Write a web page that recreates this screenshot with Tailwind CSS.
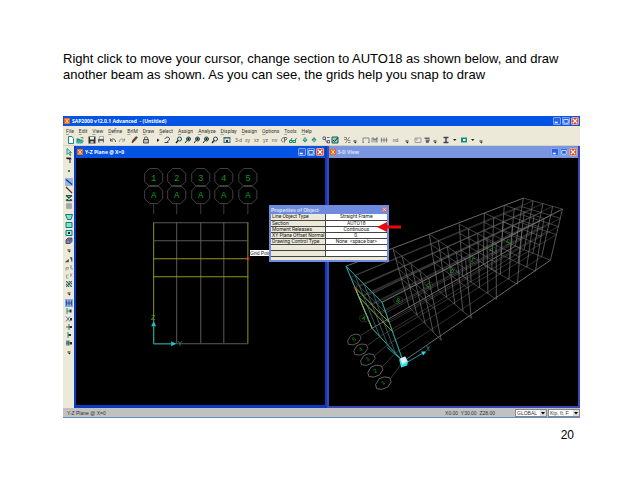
<!DOCTYPE html>
<html lang="en">
  <head>
    <meta charset="UTF-8" />
    <meta name="viewport" content="width=device-width, initial-scale=1.0" />
    <script src="https://cdn.jsdelivr.net/npm/@tailwindcss/browser@4"></script>
    <title>SAP2000 beam drawing</title>
  </head>
  <body class="bg-white text-black font-['Liberation_Sans',sans-serif]">
    <main class="pt-[51px] pl-[63px] pr-[58px]">
      <p class="text-[13px] leading-4 h-[65px]">
        Right click to move your cursor, change section to AUTO18 as shown below, and draw<br />another
        beam as shown. As you can see, the grids help you snap to draw
      </p>

      <section id="app" class="relative flex flex-col bg-[#ece9d8] text-[5px] leading-[6px]">
        <header class="flex items-center justify-between h-[10px] pl-px pr-px bg-[#0453e4] text-white">
          <div class="flex items-center gap-[2px]">
            <svg class="size-[6px]" viewBox="0 0 12 12"><use href="#logo" /></svg>
            <h1 class="font-bold whitespace-pre font-['Open_Sans',sans-serif]">SAP2000 v12.0.1 Advanced  - (Untitled)</h1>
          </div>
          <div class="flex gap-px" data-winbuttons></div>
        </header>

        <nav id="menu" class="flex items-center h-[9px] pl-[3px] gap-[5px] text-[#333] font-[Roboto,sans-serif]"></nav>

        <div id="toolbar" class="flex items-center h-[11px] pl-[3px] gap-[3px] border-b border-[#d5d2c2]"></div>

        <div class="flex">
          <div id="sidebar" class="flex flex-col items-center w-[11px] shrink-0 pt-[2px] gap-[3px]"></div>

          <section class="flex flex-col w-[252px] grow border-x-2 border-b-[3px] border-[#0a3cc0] bg-black">
            <header class="flex items-center justify-between h-3 pl-px pr-px bg-[#0453e4] text-white">
              <div class="flex items-center gap-[2px]">
                <svg class="size-[6px]" viewBox="0 0 12 12"><use href="#logo" /></svg>
                <h2 class="font-bold font-['Open_Sans',sans-serif]">Y-Z Plane @ X=0</h2>
              </div>
              <div class="flex gap-px" data-winbuttons></div>
            </header>
            <svg id="plane" class="w-full" viewBox="76 158 248 247" fill="none"></svg>
          </section>

          <section class="flex flex-col w-[253px] grow border-x-2 border-b-2 border-[#3a48b4] bg-black">
            <header class="flex items-center justify-between h-3 pl-px pr-px bg-[#7b96e1] text-[#dbe4fa]">
              <div class="flex items-center gap-[2px]">
                <svg class="size-[6px]" viewBox="0 0 12 12"><use href="#logo" /></svg>
                <h2 class="font-bold font-['Open_Sans',sans-serif]">3-D View</h2>
              </div>
              <div class="flex gap-px" data-winbuttons></div>
            </header>
            <svg id="space" class="w-full" viewBox="328 158 249 248" fill="none"></svg>
          </section>
        </div>

        <footer class="flex items-center h-[10px] pl-1 bg-[#c1c1c1] border-b border-[#5b8fd0] text-[#333]">
          <span class="grow">Y-Z Plane @ X=0</span>
          <span class="whitespace-pre mr-5">X0.00  Y30.00  Z28.00</span>
          <label class="relative flex mr-px">
            <select aria-label="Coordinate system" class="appearance-none w-8 h-2 px-px bg-white border border-[#888] text-[5px] leading-[6px]">
              <option>GLOBAL</option>
            </select>
            <svg class="absolute right-px top-px size-[6px] bg-[#ddd]" viewBox="0 0 6 6"><path d="M1 2h4L3 4.5z" fill="#000" /></svg>
          </label>
          <label class="relative flex">
            <select aria-label="Units" class="appearance-none w-8 h-2 px-px bg-white border border-[#888] text-[5px] leading-[6px]">
              <option>Kip, ft, F</option>
            </select>
            <svg class="absolute right-px top-px size-[6px] bg-[#ddd]" viewBox="0 0 6 6"><path d="M1 2h4L3 4.5z" fill="#000" /></svg>
          </label>
        </footer>

        <span class="absolute left-[187px] top-[134px] w-7 h-[6px] bg-white text-[#222] whitespace-nowrap">Grid Point</span>

        <section class="absolute left-[206px] top-[89px] w-[120px] border-2 border-t-0 border-[#6f8be0] bg-[#ece9d8]">
          <header class="flex items-center justify-between h-[9px] bg-[#6f8be0] text-[#dbe4fa]">
            <h2 class="font-bold">Properties of Object</h2>
            <button aria-label="Close" class="size-[5px] bg-[#c9788c] text-white">
              <svg viewBox="0 0 8 8" stroke="currentColor"><path d="M2 2l4 4M6 2l-4 4" /></svg>
            </button>
          </header>
          <table class="w-full border-collapse text-[#222] font-[Roboto,sans-serif]">
            <tbody id="props"></tbody>
          </table>
          <div class="h-[3px]"></div>
        </section>

        <svg class="absolute left-[314px] top-[106px] w-6 h-[10px]" viewBox="0 0 24 10">
          <path d="M0 5L10 0V3.5H24V6.500H10V10z" fill="#e8090c" />
        </svg>
      </section>

      <p class="text-right text-xs leading-4 pt-[9px] pr-[6px]">20</p>
    </main>

    <svg class="hidden">
      <symbol id="logo" viewBox="0 0 12 12">
        <rect width="12" height="12" fill="#e8641c" />
        <path d="M2 2l8 8M10 2l-8 8M6 1v10" stroke="#ffd9a0" stroke-width="1.500" />
      </symbol>
    </svg>

    <script>
      // 16x16 glyphs used by the two toolbars
      const icons = {
        new: '<path d="M3 1h7l3 4v10H3z" fill="#fff" stroke="#198c8c" stroke-width="2"/>',
        open: '<path d="M1 5h5l2 2h5v7H1z" fill="#198c8c"/><path d="M3 9h13l-3 6H1z" fill="#3bb0a8"/><path d="M9 3h5v3" stroke="#333" fill="none"/>',
        save: '<path d="M1 1h14v14H1z" fill="#333"/><path d="M4 2h8v5H4z" fill="#e8efef"/><path d="M5 10h6v5H5z" fill="#bbb"/>',
        print: '<path d="M2 6h12v7H2z" fill="#667"/><path d="M5 1h8v5H4z" fill="#fff" stroke="#555"/><path d="M5 10h7v5H5z" fill="#ddd"/>',
        undo: '<path d="M3 5v5h5M3 9c4-5 10-4 10 3" fill="none" stroke="#555" stroke-width="2"/>',
        redo: '<path d="M13 5v5H8M13 9C9 4 3 5 3 12" fill="none" stroke="#999" stroke-width="2"/>',
        pencil: '<path d="M4 14l1-5 7-8 3 2-7 8z" fill="#7c3c20" stroke="#222"/>',
        lock: '<path d="M3 7h10v7H3z" fill="#bbb" stroke="#333" stroke-width="1.500"/><path d="M5 7V3q3-3 6 0v4" fill="none" stroke="#333" stroke-width="1.500"/>',
        run: '<path d="M6 5l5 3-5 4z" fill="#222"/>',
        refresh: '<path d="M4 6c1-5 9-5 9 0s-5 3-5 7M3 13h8" fill="none" stroke="#345" stroke-width="2"/>',
        zoom: '<circle cx="9" cy="6" r="4" fill="#d8eeee" stroke="#2c4450" stroke-width="2"/><path d="M6 9l-4 5" stroke="#222" stroke-width="2.500"/>',
        zoomIn: '<circle cx="9" cy="6" r="4" fill="#7cbcb8" stroke="#2c4450" stroke-width="2"/><path d="M6 9l-4 5M7 6h4M9 4v4" stroke="#222" stroke-width="2"/>',
        pan: '<path d="M1 2h14v12H1z" fill="#3b6f7c"/><path d="M3 5h10v7H3z" fill="#cfe3e3"/><path d="M6 8h4v4H6z" fill="#333"/>',
        rotate: '<path d="M9 4C3 1 0 12 7 12M9 13V3h4q2 3-1 5H9" fill="none" stroke="#444" stroke-width="1.500"/>',
        glasses: '<path d="M1 9h5v4H1zM8 9h5v4H8zM6 10h2M3 9l3-5M12 9l3-5" fill="none" stroke="#198c70" stroke-width="2"/>',
        up: '<path d="M8 2l5 6-5 5-5-5z" fill="#178a84"/><path d="M8 5v5M5 8l3-3 3 3" stroke="#fff" fill="none"/>',
        down: '<path d="M8 2l5 6-5 5-5-5z" fill="#178a84"/><path d="M8 5v5M5 8l3 3 3-3" stroke="#fff" fill="none"/>',
        assign: '<path d="M2 2h5v5H2zM7 7l2 6M10 3h5M11 9h4v5h-4z" fill="none" stroke="#336" stroke-width="1.500"/>',
        check: '<path d="M2 2h12v12H2z" fill="#8ed2c0" stroke="#175c50" stroke-width="2"/><path d="M4 8l3 3 6-7" fill="none" stroke="#123" stroke-width="2"/>',
        percent: '<path d="M2 3h5v4H2M13 2L5 14M10 9h5M10 13h5" fill="none" stroke="#666" stroke-width="1.500"/>',
        bracket: '<path d="M2 13V4h12v9M1 13h3M12 13h3" fill="none" stroke="#667" stroke-width="1.500"/>',
        posts: '<path d="M2 13V4h4v9M10 13V4h4M12 4v9M4 7h8" fill="none" stroke="#667" stroke-width="1.500"/>',
        pins: '<path d="M3 3v10M8 3v10M13 3v10M1 8h14" fill="none" stroke="#667" stroke-width="1.500"/>',
        box: '<path d="M2 4h12v9H2z" fill="none" stroke="#888" stroke-width="1.500"/><path d="M3 5h4v4H3z" fill="#aaa"/>',
        hand: '<path d="M3 3h10v3H3zM5 7h9l-3 7H6z" fill="#667"/>',
        ibeam: '<path d="M3 3h10M3 13h10M8 3v10" stroke="#445" stroke-width="3"/>',
        area: '<path d="M2 3h12v10H2z" fill="#1b8a7c"/><path d="M6 6h5v4H6z" fill="#e0f4f0"/>',
        caret: '<path d="M4 6h7l-3.500 4z" fill="#222"/>',
        grip: '<path d="M5 9h6v2H5zM6 12h5l-2 3z" fill="#222"/>',
        arrow: '<path d="M4 1v12l3-3 3 5 2-1-3-5h4z" fill="#a8e8e4" stroke="#157878" stroke-width="1.500"/>',
        select: '<path d="M2 3h9l3 4-3-1v8H9V7L3 6z" fill="#222"/>',
        dot: '<path d="M6 6h4v4H6z" fill="#178a70"/>',
        line: '<path d="M0 0h16v16H0z" fill="#9ab4e8"/><path d="M2 3l12 10" stroke="#123a90" stroke-width="2.500"/>',
        brace: '<path d="M2 2l12 12" stroke="#5a3424" stroke-width="2.500"/>',
        cross: '<path d="M2 3l12 10M14 3L2 13M3 3h10M3 13h10" stroke="#205848" stroke-width="2.500"/>',
        mesh: '<path d="M2 2h12v12H2z" fill="#bbb"/><path d="M2 6h12M2 10h12M6 2v12M10 2v12" stroke="#888"/>',
        poly: '<path d="M1 3h14l-3 10H5z" fill="#7be0d8" stroke="#137c74" stroke-width="2"/>',
        rect: '<path d="M2 3h12v10H2z" fill="#7be0d8" stroke="#137c74" stroke-width="2"/>',
        rectDot: '<path d="M2 3h12v10H2z" fill="#a0ebe4" stroke="#137c74" stroke-width="2"/><path d="M6 6h4v4H6z" fill="#134"/>',
        solid: '<path d="M2 6l4-4h8v7l-4 4H2z" fill="#8088b8" stroke="#334" stroke-width="1.500"/><path d="M2 6h8v7M10 6l4-4" stroke="#334" fill="none"/>',
        all: '<path d="M1 12l6-5v5zM10 3h4v9" fill="#556" stroke="#333"/>',
        ps: '<path d="M2 13V7h5v3H2M10 4h4l-4 4h4v4" fill="none" stroke="#889" stroke-width="1.500"/>',
        clr: '<path d="M7 6H3v6h4M11 3v6M14 3l-2 3 2 3" fill="none" stroke="#889" stroke-width="1.500"/>',
        hatch: '<path d="M2 2h12v12H2z" fill="#a9c0c0"/><path d="M2 2l12 12M2 8l6 6M8 2l6 6M14 2L2 14" stroke="#244" stroke-width="1.500"/>',
        snap: '<path d="M0 0h16v16H0z" fill="#8aa8e4"/><path d="M2 8h12M3 3v10M8 3v10M13 3v10" stroke="#1d3c8c" stroke-width="1.500"/>',
        ends: '<path d="M4 2v12M4 8h5" stroke="#178a84" stroke-width="2"/><path d="M9 5h4v6H9z" fill="#233"/>',
        inter: '<path d="M2 3l8 10M2 13L10 3" stroke="#458" stroke-width="1.500"/><path d="M10 6h4v5h-4z" fill="#233"/>',
        perp: '<path d="M8 2v12M2 8h6" stroke="#466" stroke-width="2"/><path d="M9 6h5v4H9z" fill="#233"/>',
        edge: '<path d="M6 2v12" stroke="#178a84" stroke-width="2"/><path d="M7 6h5v4H7z" fill="#233"/>',
        fine: '<path d="M2 3h8v10H2z" fill="#8aa"/><path d="M4 3v10M7 3v10M2 8h12" stroke="#244"/><path d="M10 6h4v5h-4z" fill="#233"/>',
      };

      // a name starting with "=" is a text button
      const toolbar = [
        ["new", "open"], ["save", "print"], ["undo", "redo"], ["pencil"], ["lock"], ["run", "refresh"],
        ["zoom", "zoomIn", "zoomIn", "zoomIn", "zoom"], ["pan"],
        ["=3-d", "=xy", "=xz", "=yz", "=nv", "rotate", "glasses"], ["up", "down"], ["assign", "check"],
        ["percent", "grip"], ["bracket", "posts", "pins"], ["=nd"], ["grip"], ["box", "hand", "grip"],
        ["ibeam", "caret", "area", "caret", "grip"],
      ];
      const sidebar = [
        ["arrow", "select"], ["dot"], ["line", "brace", "cross", "mesh"], ["poly", "rect", "rectDot", "solid", "grip"],
        ["all", "ps", "clr", "hatch", "grip"], ["snap", "ends", "inter", "perp", "edge", "fine", "grip"],
      ];
      const menu = ["File", "Edit", "View", "Define", "BrIM", "Draw", "Select", "Assign", "Analyze", "Display", "Design", "Options", "Tools", "Help"];
      const props = [
        ["Line Object Type", "Straight Frame"],
        ["Section", "AUTO18"],
        ["Moment Releases", "Continuous"],
        ["XY Plane Offset Normal", "0."],
        ["Drawing Control Type", "None  <space bar>"],
        ["", ""],
        ["", ""],
      ];

      function glyph(name) {
        if (name[0] === "=") return name.slice(1);
        return `<svg class="size-2 shrink-0" viewBox="0 0 16 16">${icons[name]}</svg>`;
      }

      document.getElementById("toolbar").innerHTML = toolbar
        .map((g) => `<div class="flex">${g.map((n) => `<button aria-label="${n.replace("=", "")}" class="flex items-center justify-center ${n === "grip" ? "w-[7px]" : "w-[9px]"} h-2 text-[#555]">${glyph(n)}</button>`).join("")}</div>`)
        .join("");
      document.getElementById("sidebar").innerHTML = sidebar
        .map((g) => `<div class="flex flex-col">${g.map((n) => `<button aria-label="${n}" class="flex items-center justify-center w-[9px] h-2">${glyph(n)}</button>`).join("")}</div>`)
        .join("");
      document.getElementById("menu").innerHTML = menu
        .map((m) => `<button><span class="underline decoration-black/30">${m[0]}</span>${m.slice(1)}</button>`)
        .join("");
      document.getElementById("props").innerHTML = props
        .map(([k, v]) => `<tr class="h-[6px] border-b border-[#444]"><th scope="row" class="w-[51px] p-0 pl-px font-normal text-left leading-[5px] whitespace-nowrap border-r border-[#444]">${k}</th><td class="p-0 bg-white text-center leading-[5px] whitespace-pre">${v.replace("<", "&lt;")}</td></tr>`)
        .join("");
      document.querySelectorAll("[data-winbuttons]").forEach((el) => {
        el.innerHTML = `
          <button aria-label="Minimize" class="size-2 rounded-[1px] border border-[#7ea4f4] bg-[#2a62e4]"><svg viewBox="0 0 8 8"><path d="M1 6h4" stroke="#fff" stroke-width="2"/></svg></button>
          <button aria-label="Restore" class="size-2 rounded-[1px] border border-[#7ea4f4] bg-[#2a62e4]"><svg viewBox="0 0 8 8"><path d="M1 2h6v5H1z" fill="none" stroke="#fff"/></svg></button>
          <button aria-label="Close" class="size-2 rounded-[1px] border border-[#e8a090] bg-[#d9452c]"><svg viewBox="0 0 8 8"><path d="M1 1l6 6M7 1L1 7" stroke="#fff" stroke-width="1.500"/></svg></button>`;
      });

      const line = (a, b, color, w = 0.6) =>
        `<path d="M${a[0]} ${a[1]}L${b[0]} ${b[1]}" stroke="${color}" stroke-width="${w}"/>`;
      const mix = (a, b, t) => [a[0] + (b[0] - a[0]) * t, a[1] + (b[1] - a[1]) * t];
      const label = (x, y, text, size, color = "#0a9a22") =>
        `<text x="${x}" y="${y}" font-size="${size}" text-anchor="middle" fill="${color}" font-family="Liberation Mono, monospace">${text}</text>`;

      // elevation at X=0
      const cols = [153.5, 176.5, 200.5, 223.5, 247.5];
      let out = "";
      cols.forEach((x, i) => {
        [177.5, 194.5].forEach((y, k) => {
          out += `<path d="M${x - 4} ${y - 9}h8l5 5v8l-5 5h-8l-5-5v-8z" stroke="#5c5c5c" stroke-width="0.7"/>`;
          out += label(x, y + 3, k ? "A" : i + 1, 9);
        });
        out += line([x, 204], [x, 214], "#666");
        out += line([x, 222], [x, 343], i % 4 ? "#5a5a5a" : "#90902a", 1);
      });
      [222.5, 240.5, 343.5].forEach((y) => (out += line([153, y], [248, y], "#5a5a5a", 1)));
      [258.5, 276.5].forEach((y) => (out += line([153, y], [248, y], "#94941c", 1)));
      out += line([153.5, 343.5], [153.5, 322], "#18a0a0", 1) + line([153.5, 343.5], [172, 343.5], "#18a0a0", 1);
      out += '<path d="M151 326l2.500-5 2.500 5zM171 341l5 2.500-5 2.500z" fill="#20c0c0"/>';
      out += label(153, 320, "Z", 8, "#3c9a50") + label(180, 346, "Y", 8, "#169090");
      out += '<circle cx="247.500" cy="258.500" r="1.500" stroke="#e02020" stroke-width="0.7"/>';
      document.getElementById("plane").innerHTML = out;

      // perspective model: seven frames, corners listed from near to far
      const tl = [[345, 266], [392, 249], [428, 234], [458, 224], [483, 213], [503, 205], [522, 198]];
      const br = [[402, 361], [440, 340], [470, 318], [495, 299], [516, 284], [534, 271], [549, 260]];
      const steps = br.map((p) => (p[0] - 402) / 147);
      const frames = steps.map((t, i) => ({
        tl: tl[i],
        br: br[i],
        tr: mix([381, 302], [561, 209], t),
        bl: mix([371, 328], [514, 246], t),
      }));
      const node = (f, u, v) => mix(mix(f.tl, f.tr, u), mix(f.bl, f.br, u), v);
      const us = [0, 0.25, 0.5, 0.75, 1];
      const vs = [0, 0.18, 0.34, 0.5, 1];
      out = "";
      us.forEach((u) =>
        vs.forEach((v) => {
          const edge = (u === 0 || u === 1) && (v === 0 || v === 1);
          out += line(node(frames[0], u, v), node(frames[6], u, v), edge ? "#858585" : "#505050", edge ? 0.8 : 0.6);
        })
      );
      frames.forEach((f, i) => {
        us.forEach((u) => (out += line(node(f, u, 0), node(f, u, 1), i ? "#757575" : "#4a8080", 0.7)));
        vs.forEach((v) => (out += line(node(f, 0, v), node(f, 1, v), i ? "#6c6c6c" : "#4a8080", 0.6)));
      });
      const n = frames[0];
      out += `<path d="M${n.tl}L${n.tr}L${n.br}L${n.bl}z" stroke="#28a8a4" stroke-width="0.9"/>`;
      out += line(node(n, 0, 0.34), node(n, 1, 0.34), "#a8a020", 0.8) + line(node(n, 0, 0.5), node(n, 1, 0.5), "#a8a020", 0.8);
      out += line(node(n, 0, 0.34), node(n, 0, 1), "#7cc060", 1);
      [[353, 339, 5], [359.5, 349, 4], [366.5, 359, 3], [374, 370.5, 2], [382, 382.5, 1]].forEach(([x, y, t], i) => {
        const s = 1 + i * 0.04;
        out += `<path transform="translate(${x} ${y}) scale(${s})" d="M-6.500 1.500L-3.500-3.500L1-5.200L5.500-4.500L7-1L4 3.500L-1 5.500L-5.500 5z" stroke="#6c6c6c" stroke-width="0.8"/>`;
        out += `<g transform="rotate(-35 ${x} ${y})">${label(x, y + 2, t, 6)}</g>`;
        out += line([x + 7, y - 4], mix([371, 328], [402, 361], i / 4), "#5c5c5c", 0.6);
      });
      [[363, 318], [397, 300], [427, 285], [451, 271], [472, 260], [490, 250], [507, 241]].forEach(([x, y], i) => {
        out += `<ellipse cx="${x}" cy="${y}" rx="4.500" ry="3.500" stroke="#505050" stroke-width="0.5"/>`;
        out += `<g transform="rotate(25 ${x} ${y})">${label(x, y + 2, "ABCDEFG"[i], 6, "#10b028")}</g>`;
      });
      out += '<circle cx="354.500" cy="288" r="1.200" fill="#d83020"/>';
      out += line([404, 363], [423, 352], "#20b0b4", 0.9) + '<path d="M420 351l5 0-3 4z" fill="#30d8e0"/>';
      out += label(427, 351, "X", 7, "#169090");
      out += line([402, 361], [386, 347], "#20b0b4", 0.9);
      out += '<path d="M398 359l6-3 3 5-1 4-6 2z" fill="#28e4ec"/><path d="M399 358l5-2 2 5-5 3z" fill="#e4eeee"/>';
      document.getElementById("space").innerHTML = out;
    </script>
  </body>
</html>
